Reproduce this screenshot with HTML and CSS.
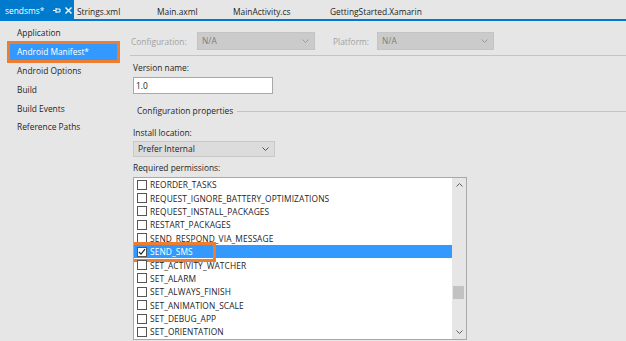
FILE: index.html
```html
<!DOCTYPE html>
<html lang="en">
<head>
    <meta charset="UTF-8">
    <title>sendsms - Android Manifest</title>
    <link rel="stylesheet" href="styles.css">
</head>
<body>
    <div class="tabs">
        <div class="tab active">sendsms*
            <svg class="pin" width="8" height="7" viewBox="0 0 8 7"><path d="M0 3.5h3M3 1v5M3 2h4v3H3" fill="none" stroke="#fff" stroke-width="1"/></svg>
            <svg class="close" width="7" height="7" viewBox="0 0 7 7"><path d="M0.5 0.5l6 6M6.5 0.5l-6 6" stroke="#fff" stroke-width="1.4"/></svg>
        </div>
        <div class="tab t2">Strings.xml</div>
        <div class="tab t3">Main.axml</div>
        <div class="tab t4">MainActivity.cs</div>
        <div class="tab t5">GettingStarted.Xamarin</div>
    </div>

    <div class="main">
        <ul class="nav">
            <li class="nav-item">Application</li>
            <li class="nav-item selected"><span>Android Manifest*</span></li>
            <li class="nav-item">Android Options</li>
            <li class="nav-item">Build</li>
            <li class="nav-item">Build Events</li>
            <li class="nav-item">Reference Paths</li>
        </ul>

        <div class="content">
            <div class="config-bar">
                <span class="bar-label">Configuration:</span>
                <div class="select disabled config-select">N/A
                    <svg class="chev" width="7" height="4" viewBox="0 0 7 4"><path d="M0.5 0.5l3 3 3-3" fill="none" stroke="#9a9a9a"/></svg>
                </div>
                <span class="bar-label platform-label">Platform:</span>
                <div class="select disabled platform-select">N/A
                    <svg class="chev" width="7" height="4" viewBox="0 0 7 4"><path d="M0.5 0.5l3 3 3-3" fill="none" stroke="#9a9a9a"/></svg>
                </div>
            </div>

            <div class="form">
                <div class="field-label">Version name:</div>
                <div class="textbox">1.0</div>

                <div class="group-title"><span>Configuration properties</span></div>

                <div class="field-label spaced">Install location:</div>
                <div class="select install-select">Prefer Internal
                    <svg class="chev" width="7" height="4" viewBox="0 0 7 4"><path d="M0.5 0.5l3 3 3-3" fill="none" stroke="#555"/></svg>
                </div>

                <div class="field-label perm-label">Required permissions:</div>
                <div class="listbox">
                    <div class="list-items">
                        <div class="row"><span class="check"></span>REORDER_TASKS</div>
                        <div class="row"><span class="check"></span>REQUEST_IGNORE_BATTERY_OPTIMIZATIONS</div>
                        <div class="row"><span class="check"></span>REQUEST_INSTALL_PACKAGES</div>
                        <div class="row"><span class="check"></span>RESTART_PACKAGES</div>
                        <div class="row"><span class="check"></span>SEND_RESPOND_VIA_MESSAGE</div>
                        <div class="row active">
                            <span class="highlight"><span class="check checked">
                                <svg width="8" height="8" viewBox="0 0 8 8"><path d="M1 4l2 2.2L7 1.2" fill="none" stroke="#222" stroke-width="1.2"/></svg>
                            </span>SEND_SMS</span>
                        </div>
                        <div class="row"><span class="check"></span>SET_ACTIVITY_WATCHER</div>
                        <div class="row"><span class="check"></span>SET_ALARM</div>
                        <div class="row"><span class="check"></span>SET_ALWAYS_FINISH</div>
                        <div class="row"><span class="check"></span>SET_ANIMATION_SCALE</div>
                        <div class="row"><span class="check"></span>SET_DEBUG_APP</div>
                        <div class="row"><span class="check"></span>SET_ORIENTATION</div>
                    </div>
                    <div class="scrollbar">
                        <svg class="arrow" width="7" height="4" viewBox="0 0 7 4"><path d="M0.5 3.5l3-3 3 3" fill="none" stroke="#606060"/></svg>
                        <div class="track"><div class="thumb"></div></div>
                        <svg class="arrow" width="7" height="4" viewBox="0 0 7 4"><path d="M0.5 0.5l3 3 3-3" fill="none" stroke="#606060"/></svg>
                    </div>
                </div>
            </div>
        </div>
    </div>
</body>
</html>
```

FILE: styles.css
```css
body {
    margin: 0;
    width: 626px;
    height: 341px;
    overflow: hidden;
    background-color: #e6e6e6;
    font-family: "Open Sans", "Noto Sans", sans-serif;
    font-size: 8.4px;
    color: #1e1e1e;
}
.tabs {
    display: flex;
    height: 19px;
    border-bottom: 2px solid #007acc;
}
.tab {
    line-height: 19px;
    padding-top: 2px;
    box-sizing: border-box;
    padding-left: 3px;
    white-space: nowrap;
    color: #1e1e1e;
}
.tab.active {
    width: 74px;
    padding-left: 5px;
    background-color: #007acc;
    color: #fff;
    display: flex;
    align-items: center;
}
.tab .pin {
    margin-left: 9px;
}
.tab .close {
    margin-left: 4px;
}
.t2 { width: 80px; }
.t3 { width: 76px; }
.t4 { width: 97px; }
.main {
    display: flex;
}
.nav {
    list-style: none;
    margin: 0;
    padding: 2.7px 0 0;
    width: 124px;
    flex-shrink: 0;
}
.nav-item {
    height: 18.6px;
    line-height: 18.6px;
    padding-left: 17px;
}
.nav-item.selected {
    padding-left: 0;
}
.nav-item.selected span {
    display: block;
    margin: 1.6px 7px 1px 10px;
    height: 16px;
    line-height: 16px;
    padding-left: 7px;
    background-color: #3399ff;
    color: #fff;
    outline: 3px solid #ed7d31;
}
.content {
    flex: 1;
    padding-top: 11px;
}
.config-bar {
    display: flex;
    align-items: center;
    margin-left: 6px;
    padding-left: 1px;
    padding-bottom: 5px;
    border-bottom: 1px solid #c4c4c4;
    height: 18px;
}
.bar-label {
    color: #a2a2a2;
    width: 66px;
}
.platform-label {
    width: 44px;
    margin-left: 18px;
}
.select {
    position: relative;
    box-sizing: border-box;
    height: 18px;
    line-height: 16px;
    padding-left: 4px;
    border: 1px solid #c8c8c8;
    background-color: #dcdcdc;
}
.select .chev {
    position: absolute;
    right: 5px;
    top: 6px;
}
.select.disabled {
    background-color: #cbcbcb;
    border-color: #c4c4c4;
    color: #7c7c7c;
}
.config-select {
    width: 118px;
}
.platform-select {
    width: 117px;
}
.form {
    padding: 5px 0 0 9px;
}
.field-label {
    height: 13px;
    line-height: 13px;
}
.field-label.spaced {
    margin-top: 9px;
}
.textbox {
    box-sizing: border-box;
    width: 140px;
    height: 17px;
    line-height: 15px;
    margin-top: 3px;
    padding-left: 2px;
    border: 1px solid #a8a8a8;
    background-color: #fff;
}
.group-title {
    display: flex;
    align-items: center;
    margin-top: 9px;
    height: 14px;
}
.group-title span {
    padding: 0 4px;
}
.group-title::after {
    content: "";
    flex: 1;
    border-top: 1px solid #c4c4c4;
    margin-top: 2px;
}
.install-select {
    width: 142px;
    height: 16px;
    line-height: 14px;
    margin-top: 2px;
}
.install-select .chev {
    top: 5px;
}
.perm-label {
    margin-top: 4px;
}
.listbox {
    display: flex;
    box-sizing: border-box;
    width: 334px;
    height: 163px;
    margin-top: 3px;
    border: 1px solid #a8a8a8;
}
.list-items {
    flex: 1;
    background-color: #fff;
    overflow: hidden;
}
.row {
    display: flex;
    align-items: center;
    height: 13.4px;
    padding-left: 3px;
    white-space: nowrap;
    letter-spacing: 0.1px;
}
.check {
    box-sizing: border-box;
    display: inline-flex;
    align-items: center;
    justify-content: center;
    width: 10px;
    height: 10px;
    margin-right: 3px;
    border: 1px solid #555;
    background-color: #fff;
}
.row.active {
    background-color: #3399ff;
    color: #fff;
    padding-left: 0;
}
.highlight {
    display: inline-flex;
    align-items: center;
    height: 14px;
    padding: 0 20px 0 3px;
    outline: 3px solid #ed7d31;
}
.scrollbar {
    width: 14px;
    display: flex;
    flex-direction: column;
    align-items: center;
}
.arrow {
    margin: 5px 0;
}
.track {
    flex: 1;
    width: 100%;
    position: relative;
}
.thumb {
    position: absolute;
    left: 1px;
    right: 2px;
    top: 94px;
    height: 13px;
    background-color: #c2c2c2;
}
```
